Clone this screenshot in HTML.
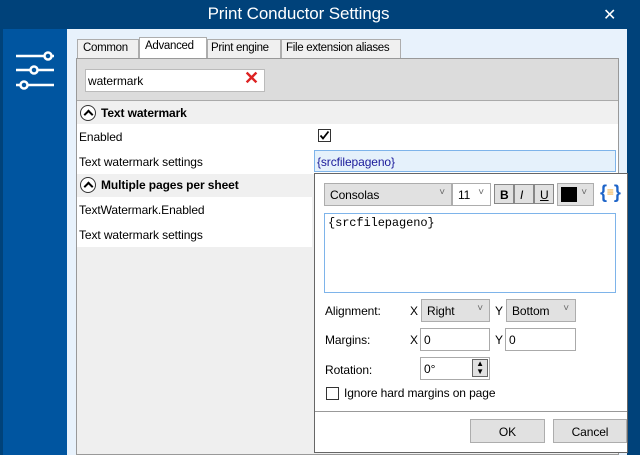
<!DOCTYPE html>
<html><head><style>
*{box-sizing:border-box;margin:0;padding:0}
body{width:640px;height:455px;position:relative;overflow:hidden;font-family:"Liberation Sans",sans-serif;font-size:12px;color:#000;background:#00427a;letter-spacing:-0.1px}
.a{position:absolute}
.tab{position:absolute;top:39px;height:19px;border:1px solid #adadad;border-bottom:none;background:#f0f0f0;font-size:11.5px;padding:2px 0 0 5px;white-space:nowrap;letter-spacing:-0.3px}
.row{position:absolute;left:77px;width:235px;height:25px;background:#fff;padding:6px 0 0 2px}
.sec{position:absolute;left:77px;width:541px;height:23px;background:#f0f0f0;font-weight:bold;padding:4px 0 0 24px}
.circ{position:absolute;left:3px;top:3px;width:16px;height:16px;border:1px solid #333;border-radius:50%;background:#fff}
.circ:after{content:"";position:absolute;left:4px;top:5px;width:5px;height:5px;border-left:2px solid #000;border-top:2px solid #000;transform:rotate(45deg)}
.cb{position:absolute;width:20px;height:20px;border:1px solid #888;background:#e1e1e1;font-size:12px;padding:3px 5px}
.inp{position:absolute;height:23px;border:1px solid #aaa;background:#fff;padding:4px 3px}
.dd{position:absolute;height:23px;border:1px solid #adadad;background:#e1e1e1;padding:4px 5px}
.dd:after{content:"˅";position:absolute;right:6px;top:3px;color:#666;font-size:10px}
.btn{position:absolute;height:24px;border:1px solid #adadad;background:#e1e1e1;text-align:center;padding-top:5px}
</style></head><body>
<div class="a" style="left:0;top:0;width:640px;height:29px;background:#00427a"></div>
<div class="a" style="left:0;top:4px;width:597px;text-align:center;color:#fff;font-size:17px">Print Conductor Settings</div>
<div class="a" style="left:603px;top:5px;color:#fff;font-size:16px">✕</div>
<div class="a" style="left:3px;top:29px;width:64px;height:426px;background:#0055a0"></div>
<svg class="a" style="left:14px;top:50px" width="42" height="42">
<g stroke="#fff" stroke-width="2.5" fill="#0055a0"><line x1="2" y1="6" x2="40" y2="6"/><line x1="2" y1="20" x2="40" y2="20"/><line x1="2" y1="35" x2="40" y2="35"/>
<circle cx="34" cy="6" r="3.5"/><circle cx="20" cy="20" r="3.5"/><circle cx="10" cy="35" r="3.5"/></g></svg>
<div class="a" style="left:67px;top:29px;width:560px;height:426px;background:#e8f2fc"></div>
<div class="tab" style="left:77px;width:62px">Common</div>
<div class="tab" style="left:139px;top:37px;height:21px;width:68px;background:#fff">Advanced</div>
<div class="tab" style="left:207px;width:74px;padding-left:3px">Print engine</div>
<div class="tab" style="left:281px;width:120px;padding-left:4px">File extension aliases</div>
<div class="a" style="left:76px;top:58px;width:543px;height:397px;border:1px solid #999;background:#efefef"></div>
<div class="a" style="left:77px;top:59px;width:541px;height:42px;background:#dcdcdc;border-bottom:1px solid #aaa"></div>
<div class="a" style="left:85px;top:69px;width:180px;height:23px;background:#fff;border:1px solid #bbb;padding:4px 2px">watermark</div>
<div class="a" style="left:244px;top:68px;color:#d22;font-size:18px;font-weight:bold">✕</div>
<div class="sec" style="top:102px"><div class="circ"></div>Text watermark</div>
<div class="a" style="left:77px;top:124px;width:541px;height:50px;background:#fff"></div>
<div class="row" style="top:124px">Enabled</div>
<div class="row" style="top:149px">Text watermark settings</div>
<div class="a" style="left:318px;top:129px;width:13px;height:13px;border:1px solid #333"></div>
<svg class="a" style="left:318px;top:129px" width="13" height="13"><path d="M2.5 6.5 L5 9.5 L10.5 2.5" stroke="#000" stroke-width="1.8" fill="none"/></svg>
<div class="a" style="left:314px;top:150px;width:302px;height:22px;background:#e5f1fb;border:1px solid #7eb4ea;color:#1a1a9a;padding:4px 2px">{srcfilepageno}</div>
<div class="sec" style="top:174px"><div class="circ"></div>Multiple pages per sheet</div>
<div class="a" style="left:77px;top:197px;width:235px;height:50px;background:#fff"></div>
<div class="row" style="top:197px">TextWatermark.Enabled</div>
<div class="row" style="top:222px">Text watermark settings</div>
<div class="a" style="left:314px;top:173px;width:314px;height:280px;background:#fff;border:1px solid #666"></div>
<div class="dd" style="left:324px;top:183px;width:128px;background:#e1e1e1">Consolas</div>
<div class="dd" style="left:452px;top:183px;width:39px;background:#fff;font-size:12px">11</div>
<div class="cb" style="left:494px;top:184px;font-weight:bold">B</div>
<div class="cb" style="left:514px;top:184px;font-style:italic">I</div>
<div class="cb" style="left:534px;top:184px;text-decoration:underline">U</div>
<div class="dd" style="left:557px;top:183px;width:37px;padding:3px"><div style="width:16px;height:15px;background:#000"></div></div>
<div class="a" style="left:600px;top:182px;color:#1e64c8;font-size:18px;font-weight:bold">{<span style="color:#f0a020;font-size:12px;position:relative;top:-2px">≡</span>}</div>
<div class="a" style="left:324px;top:213px;width:292px;height:80px;border:1px solid #7eb4ea;font-family:'Liberation Mono',monospace;font-size:12px;padding:2px 3px">{srcfilepageno}</div>
<div class="a" style="left:325px;top:304px">Alignment:</div>
<div class="a" style="left:410px;top:304px">X</div>
<div class="dd" style="left:421px;top:299px;width:69px">Right</div>
<div class="a" style="left:495px;top:304px">Y</div>
<div class="dd" style="left:506px;top:299px;width:70px">Bottom</div>
<div class="a" style="left:325px;top:333px">Margins:</div>
<div class="a" style="left:410px;top:333px">X</div>
<div class="inp" style="left:420px;top:328px;width:70px">0</div>
<div class="a" style="left:495px;top:333px">Y</div>
<div class="inp" style="left:505px;top:328px;width:71px">0</div>
<div class="a" style="left:325px;top:363px">Rotation:</div>
<div class="inp" style="left:420px;top:357px;width:70px">0°</div>
<div class="a" style="left:472px;top:359px;width:16px;height:18px;border:1px solid #666;background:#e1e1e1;font-size:8px;line-height:8px;text-align:center">▲<br>▼</div>
<div class="a" style="left:326px;top:387px;width:13px;height:13px;border:1px solid #333;background:#fff"></div>
<div class="a" style="left:344px;top:386px">Ignore hard margins on page</div>
<div class="a" style="left:315px;top:411px;width:312px;height:1px;background:#999"></div>
<div class="btn" style="left:470px;top:419px;width:75px">OK</div>
<div class="btn" style="left:553px;top:419px;width:74px">Cancel</div>
</body></html>
